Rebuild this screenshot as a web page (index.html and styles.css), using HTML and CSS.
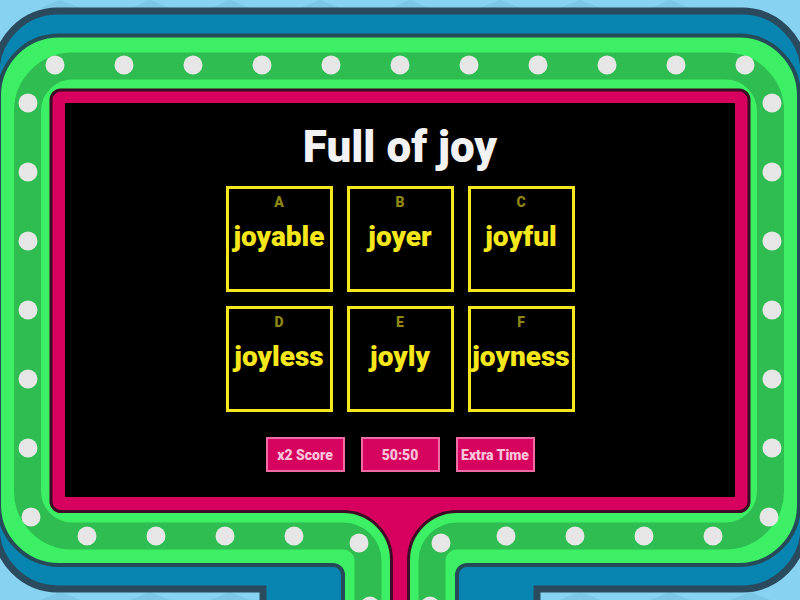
FILE: index.html
```html
<!DOCTYPE html>
<html lang="en">
<head>
<meta charset="utf-8">
<title>Full of joy</title>
<link rel="stylesheet" href="styles.css">
</head>
<body>
<div class="stage">
  <svg class="frame" width="800" height="600" viewBox="0 0 800 600" aria-hidden="true">
    <g class="pattern">
      <polygon points="60,0 80,8 40,8"/>
      <polygon points="150,0 170,8 130,8"/>
      <polygon points="230,0 250,8 210,8"/>
      <polygon points="320,0 340,8 300,8"/>
      <polygon points="410,0 430,8 390,8"/>
      <polygon points="500,0 520,8 480,8"/>
      <polygon points="580,0 600,8 560,8"/>
      <polygon points="670,0 690,8 650,8"/>
      <polygon points="40,600 60,592 80,600"/>
      <polygon points="130,600 150,592 170,600"/>
      <polygon points="210,600 230,592 250,600"/>
      <polygon points="560,600 580,592 600,600"/>
      <polygon points="650,600 670,592 690,600"/>
      <polygon points="730,600 750,592 770,600"/>
    </g>
    <path class="outer" d="M 58 11 H 742 A 62 62 0 0 1 804 73 V 527 A 62 62 0 0 1 742 589 H 537 V 620 H 263 V 589 H 58 A 62 62 0 0 1 -4 527 V 73 A 62 62 0 0 1 58 11 Z"/>
    <path class="green" d="M 59 35.5 H 739 A 60 60 0 0 1 799 95.5 V 505 A 60 60 0 0 1 739 565 H 467 A 10 10 0 0 0 457 575 V 620 H 343 V 575 A 10 10 0 0 0 333 565 H 59 A 60 60 0 0 1 -1 505 V 95.5 A 60 60 0 0 1 59 35.5 Z"/>
    <path class="band" d="M 368 620 V 561 A 25 25 0 0 0 343 536 H 72 A 45 45 0 0 1 27.5 491 V 111 A 45 45 0 0 1 72.5 66 H 725.5 A 45 45 0 0 1 770.5 111 V 491 A 45 45 0 0 1 725.5 536 H 457 A 25 25 0 0 0 432 561 V 620"/>
    <path class="pink" d="M 61 90 H 739 A 10 10 0 0 1 749 100 V 501.5 A 10 10 0 0 1 739 511.5 H 457 A 48.5 48.5 0 0 0 408.5 560 V 620 H 391.5 V 560 A 48.5 48.5 0 0 0 343 511.5 H 61 A 10 10 0 0 1 51 501.5 V 100 A 10 10 0 0 1 61 90 Z"/>
    <g class="dots">
      <circle cx="55" cy="65" r="9.5"/><circle cx="124" cy="65" r="9.5"/><circle cx="193" cy="65" r="9.5"/>
      <circle cx="262" cy="65" r="9.5"/><circle cx="331" cy="65" r="9.5"/><circle cx="400" cy="65" r="9.5"/>
      <circle cx="469" cy="65" r="9.5"/><circle cx="538" cy="65" r="9.5"/><circle cx="607" cy="65" r="9.5"/>
      <circle cx="676" cy="65" r="9.5"/><circle cx="745" cy="65" r="9.5"/>
      <circle cx="28" cy="103" r="9.5"/><circle cx="28" cy="172" r="9.5"/><circle cx="28" cy="241" r="9.5"/>
      <circle cx="28" cy="310" r="9.5"/><circle cx="28" cy="379" r="9.5"/><circle cx="28" cy="448" r="9.5"/>
      <circle cx="31" cy="517" r="9.5"/>
      <circle cx="772" cy="103" r="9.5"/><circle cx="772" cy="172" r="9.5"/><circle cx="772" cy="241" r="9.5"/>
      <circle cx="772" cy="310" r="9.5"/><circle cx="772" cy="379" r="9.5"/><circle cx="772" cy="448" r="9.5"/>
      <circle cx="769" cy="517" r="9.5"/>
      <circle cx="87" cy="536" r="9.5"/><circle cx="156" cy="536" r="9.5"/><circle cx="225" cy="536" r="9.5"/>
      <circle cx="294" cy="536" r="9.5"/><circle cx="359" cy="543" r="9.5"/>
      <circle cx="441" cy="543" r="9.5"/><circle cx="506" cy="536" r="9.5"/><circle cx="575" cy="536" r="9.5"/>
      <circle cx="644" cy="536" r="9.5"/><circle cx="713" cy="536" r="9.5"/>
      <circle cx="370" cy="606" r="9.5"/><circle cx="430" cy="606" r="9.5"/>
    </g>
  </svg>

  <main class="screen">
    <h1 class="title">Full of joy</h1>
    <div class="grid">
      <div class="card"><span class="letter">A</span><span class="word">joyable</span></div>
      <div class="card"><span class="letter">B</span><span class="word">joyer</span></div>
      <div class="card"><span class="letter">C</span><span class="word">joyful</span></div>
      <div class="card"><span class="letter">D</span><span class="word">joyless</span></div>
      <div class="card"><span class="letter">E</span><span class="word">joyly</span></div>
      <div class="card"><span class="letter">F</span><span class="word">joyness</span></div>
    </div>
    <div class="powerups">
      <button class="power" type="button">x2 Score</button>
      <button class="power" type="button">50:50</button>
      <button class="power" type="button">Extra Time</button>
    </div>
  </main>
</div>
</body>
</html>
```

FILE: styles.css
```css
html, body {
  margin: 0;
  padding: 0;
}

body {
  font-family: Roboto, "Liberation Sans", sans-serif;
  background: #86d2f0;
}

.stage {
  position: relative;
  width: 800px;
  height: 600px;
  overflow: hidden;
  background: #86d2f0;
}

.frame {
  position: absolute;
  top: 0;
  left: 0;
  display: block;
}

.pattern polygon {
  fill: #7cc7e6;
}

.outer {
  fill: #0784b0;
  stroke: #2a4a5e;
  stroke-width: 7;
}

.green {
  fill: #3cef64;
  stroke: #254a58;
  stroke-width: 4;
}

.band {
  fill: none;
  stroke: #2fbc50;
  stroke-width: 27;
}

.pink {
  fill: #d8005f;
  stroke: #3d0c24;
  stroke-width: 3;
}

.dots circle {
  fill: #e6e6e6;
}

.screen {
  position: relative;
  box-sizing: border-box;
  width: 670px;
  height: 394px;
  margin: 103px 0 0 65px;
  background: #000;
  display: flex;
  flex-direction: column;
  align-items: center;
}

.title {
  margin: 0;
  padding-top: 22px;
  font-size: 44px;
  line-height: 45px;
  font-weight: 900;
  color: #f2f2f2;
}

.grid {
  margin-top: 16px;
  display: grid;
  grid-template-columns: repeat(3, 107px);
  grid-auto-rows: 106px;
  gap: 14px;
}

.card {
  box-sizing: border-box;
  border: 3px solid #f6e71c;
  display: flex;
  flex-direction: column;
  align-items: center;
}

.letter {
  margin-top: 5px;
  font-size: 14px;
  line-height: 16px;
  font-weight: 900;
  color: #8d8612;
}

.word {
  margin-top: 11px;
  font-size: 28px;
  line-height: 32px;
  font-weight: 900;
  color: #f6e71c;
  white-space: nowrap;
}

.powerups {
  margin-top: 25px;
  display: flex;
  gap: 16px;
}

.power {
  box-sizing: border-box;
  width: 79px;
  height: 35px;
  padding: 0;
  background: #d6045e;
  border: 2px solid #f06aa6;
  color: #f9c3da;
  font-family: inherit;
  font-size: 14px;
  font-weight: 900;
  white-space: nowrap;
}
```
